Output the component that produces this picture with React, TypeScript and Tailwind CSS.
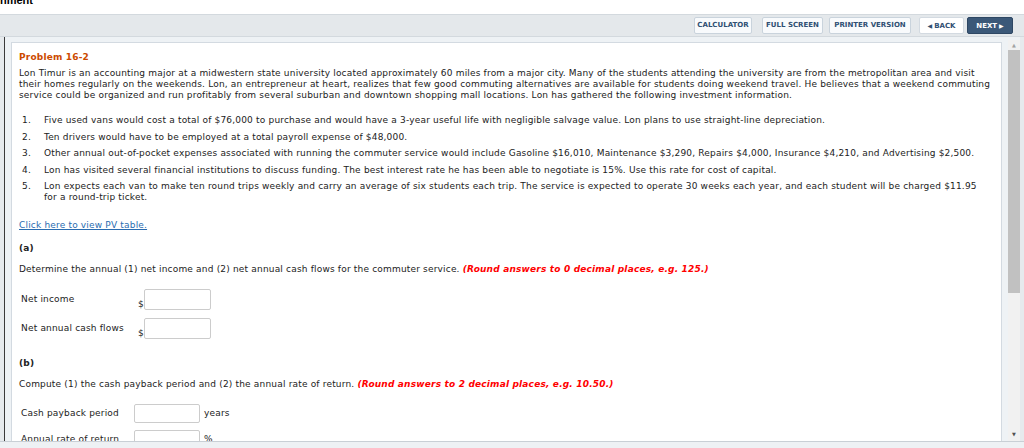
import React from 'react';

const items = [
  'Five used vans would cost a total of $76,000 to purchase and would have a 3-year useful life with negligible salvage value. Lon plans to use straight-line depreciation.',
  'Ten drivers would have to be employed at a total payroll expense of $48,000.',
  'Other annual out-of-pocket expenses associated with running the commuter service would include Gasoline $16,010, Maintenance $3,290, Repairs $4,000, Insurance $4,210, and Advertising $2,500.',
  'Lon has visited several financial institutions to discuss funding. The best interest rate he has been able to negotiate is 15%. Use this rate for cost of capital.',
  'Lon expects each van to make ten round trips weekly and carry an average of six students each trip. The service is expected to operate 30 weeks each year, and each student will be charged $11.95 for a round-trip ticket.',
];

export default function App() {
  const btn = 'h-[17px] rounded-[2px] border font-bold text-[7px] leading-[15px] text-center';
  return (
    <div className="w-[1024px] h-[448px] overflow-hidden bg-[#eef2f5] font-['DejaVu_Sans',Verdana,sans-serif] text-[9px] leading-[11px] text-[#222]">
      <div className="h-[14px] bg-white overflow-hidden">
        <h1 className="-ml-[30px] -mt-[5px] font-['Liberation_Sans',Arial,sans-serif] font-bold text-[11px] leading-[11px] text-black">Assignment</h1>
      </div>

      <div className="h-[23px] bg-[#e4e8eb] border-t border-b border-[#d3d9de] flex items-center justify-end pr-[11px]">
        <button className={`${btn} w-[58px] bg-[#f8fafc] border-[#c9d3dc] text-[#2f4f73]`}>CALCULATOR</button>
        <button className={`${btn} ml-[10px] w-[61px] bg-[#f8fafc] border-[#c9d3dc] text-[#2f4f73]`}>FULL SCREEN</button>
        <button className={`${btn} ml-[6px] w-[82px] bg-[#f8fafc] border-[#c9d3dc] text-[#2f4f73]`}>PRINTER VERSION</button>
        <button className={`${btn} ml-[8px] w-[45px] bg-white border-[#d3dae1] text-[#2f4f73] text-[7.5px]`}>
          <span className="text-[6px] mr-[2px]">◀</span>BACK
        </button>
        <button className={`${btn} ml-[3px] w-[46px] bg-[#3b5878] border-[#2e4763] text-white text-[7.5px]`}>
          NEXT<span className="text-[6px] ml-[2px]">▶</span>
        </button>
      </div>

      <div className="flex h-[404px]">
        <div className="w-[4px] bg-[#e6eaed]" />
        <div className="w-[1px] bg-[#3a3a3a]" />
        <div className="w-[6px]" />
        <div className="mt-[5px] w-[991px] border-l border-t border-r border-[#d3dae1] bg-white overflow-hidden pl-[7px] pr-[8px] pt-[9px] tracking-[0.18px]">
          <h2 className="font-bold text-[#cc4a00]">Problem 16-2</h2>
          <p className="mt-[5px]">
            Lon Timur is an accounting major at a midwestern state university located approximately 60 miles from a major city. Many of the students attending the university are from the metropolitan area and visit their homes regularly on the weekends. Lon, an entrepreneur at heart, realizes that few good commuting alternatives are available for students doing weekend travel. He believes that a weekend commuting service could be organized and run profitably from several suburban and downtown shopping mall locations. Lon has gathered the following investment information.
          </p>

          <ol className="mt-[14px] flex flex-col gap-[5.5px]">
            {items.map((t, i) => (
              <li key={i} className="flex">
                <span className="w-[25px] shrink-0 pl-[3px]">{i + 1}.</span>
                <span className="flex-1 pr-[3px]">{t}</span>
              </li>
            ))}
          </ol>

          <a className="block mt-[17px] text-[#2a6cb0] underline w-fit">Click here to view PV table.</a>

          <div className="mt-[12px] font-bold">(a)</div>
          <p className="mt-[10px]">
            Determine the annual (1) net income and (2) net annual cash flows for the commuter service.{' '}
            <span className="font-bold italic text-[#ff0000]">(Round answers to 0 decimal places, e.g. 125.)</span>
          </p>

          <div className="mt-[13.5px] flex items-center h-[21px]">
            <span className="w-[119px] pl-[2px]">Net income</span>
            <span className="w-[6px] self-end">$</span>
            <input className="w-[67px] h-[21px] border border-[#cccccc] rounded-[2px]" />
          </div>
          <div className="mt-[8px] flex items-center h-[21px]">
            <span className="w-[119px] pl-[2px]">Net annual cash flows</span>
            <span className="w-[6px] self-end">$</span>
            <input className="w-[67px] h-[21px] border border-[#cccccc] rounded-[2px]" />
          </div>

          <div className="mt-[19px] font-bold">(b)</div>
          <p className="mt-[10.5px]">
            Compute (1) the cash payback period and (2) the annual rate of return.{' '}
            <span className="font-bold italic text-[#ff0000]">(Round answers to 2 decimal places, e.g. 10.50.)</span>
          </p>

          <div className="mt-[13.5px] flex items-center h-[19px]">
            <span className="w-[115px] pl-[2px]">Cash payback period</span>
            <input className="w-[66px] h-[19px] border border-[#cccccc] rounded-[2px]" />
            <span className="ml-[4px]">years</span>
          </div>
          <div className="mt-[7px] flex items-center h-[19px]">
            <span className="w-[115px] pl-[2px]">Annual rate of return</span>
            <input className="w-[66px] h-[19px] border border-[#cccccc] rounded-[2px]" />
            <span className="ml-[4px]">%</span>
          </div>
        </div>
        <div className="w-[6px]" />
        <div className="mt-[3px] w-[12px] flex flex-col bg-[#f1f1f1]">
          <div className="h-[10px] flex items-center justify-center text-[5px] leading-[5px] text-[#a3a3a3]">▲</div>
          <div className="h-[243px] bg-[#c1c1c1]" />
          <div className="flex-1" />
          <div className="h-[14px] flex items-center justify-center text-[5px] leading-[5px] text-[#505050]">▼</div>
        </div>
        <div className="w-[4px] bg-[#e6eaed]" />
      </div>

      <div className="h-[7px] border-t border-[#c9cfd5] bg-[#eef1f4]" />
    </div>
  );
}
